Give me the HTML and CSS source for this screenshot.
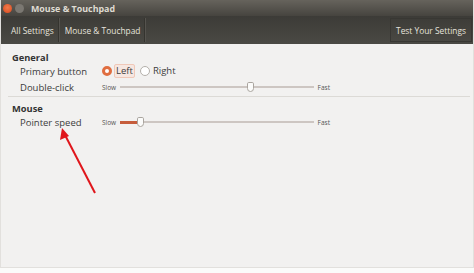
FILE: index.html
```html
<!DOCTYPE html>
<html lang="en">
<head>
  <meta charset="UTF-8" />
  <title>Mouse &amp; Touchpad</title>
  <link rel="stylesheet" href="styles.css">
</head>
<body>
  <div class="window">
    <!-- ===== TITLE BAR ===== -->
    <header class="titlebar">
      <span class="dot close"></span>
      <span class="dot min"></span>
      <span class="title">Mouse &amp; Touchpad</span>
    </header>

    <!-- ===== TOOLBAR ===== -->
    <nav class="toolbar">
      <button class="tb-btn">All Settings</button>
      <button class="tb-btn">Mouse &amp; Touchpad</button>
      <button class="tb-btn right">Test Your Settings</button>
    </nav>

    <!-- ===== CONTENT ===== -->
    <main class="content">
      <section class="group">
        <h2>General</h2>
        <div class="row">
          <span class="label">Primary button</span>
          <label class="radio checked"><span class="circle"></span><span class="rtext">Left</span></label>
          <label class="radio"><span class="circle"></span><span class="rtext">Right</span></label>
        </div>
        <div class="row">
          <span class="label">Double-click</span>
          <div class="slider">
            <span class="end">Slow</span>
            <div class="track"><span class="knob" style="left: 67%"></span></div>
            <span class="end">Fast</span>
          </div>
        </div>
      </section>

      <hr class="sep">

      <section class="group">
        <h2>Mouse</h2>
        <div class="row">
          <span class="label">Pointer speed</span>
          <div class="slider">
            <span class="end">Slow</span>
            <div class="track"><span class="fill" style="width: 10%"></span><span class="knob" style="left: 10%"></span></div>
            <span class="end">Fast</span>
          </div>
        </div>
      </section>
    </main>

    <!-- annotation arrow -->
    <svg class="arrow" width="474" height="273" viewBox="0 0 474 273">
      <line x1="95" y1="193" x2="65" y2="135" stroke="#e0161b" stroke-width="2" />
      <polygon points="62,128 60,140 69,136" fill="#e0161b" />
    </svg>
  </div>
</body>
</html>
```

FILE: styles.css
```css
* { box-sizing: border-box; margin: 0; padding: 0; }

body {
  width: 474px;
  height: 273px;
  background: #fbfbfa;
  font-family: "Open Sans", "DejaVu Sans", sans-serif;
  overflow: hidden;
}

.window {
  position: relative;
  height: 268px;
  background: #f2f1f0;
  border: 1px solid #e2e0dd;
  border-top: none;
  display: flex;
  flex-direction: column;
}

/* ===== TITLE BAR ===== */
.titlebar {
  height: 16px;
  background: linear-gradient(#66635c, #46443f);
  display: flex;
  align-items: center;
  padding-left: 2px;
  gap: 3px;
}
.dot { width: 9px; height: 9px; border-radius: 50%; }
.dot.close { background: radial-gradient(circle at 50% 40%, #f27c4c, #d9471c); }
.dot.min { background: #7b7872; }
.title {
  margin-left: 4px;
  color: #dfdbd2;
  font-size: 8.9px;
  font-weight: 700;
}

/* ===== TOOLBAR ===== */
.toolbar {
  height: 28px;
  background: linear-gradient(#3c3b37, #4a4944);
  display: flex;
  align-items: center;
  padding: 0 1px 0 7px;
  gap: 3px;
}
.tb-btn {
  font-family: inherit;
  font-size: 8.4px;
  color: #e6e3dd;
  background: transparent;
  border: none;
  border-right: 1px solid #35342f;
  box-shadow: 1px 0 0 #55534e;
  height: 24px;
  padding: 0 4px 0 3px;
}
.tb-btn.right {
  margin-left: auto;
  border: 1px solid #383733;
  box-shadow: none;
  padding: 0 5px;
}

/* ===== CONTENT ===== */
.content {
  padding: 8px 7px 0 11px;
  color: #3c3c3c;
  font-size: 9.5px;
}
.group h2 {
  font-size: 9.3px;
  font-weight: 700;
  color: #333;
  height: 12px;
  line-height: 12px;
}
.row {
  display: flex;
  align-items: center;
  height: 14px;
  padding-left: 8px;
  margin-bottom: 2px;
}
.label { width: 82px; }

.radio { display: flex; align-items: center; margin-right: 5px; }
.circle {
  width: 10px;
  height: 10px;
  border-radius: 50%;
  border: 1px solid #b4b0aa;
  background: #fff;
  margin-right: 2px;
}
.radio.checked .circle {
  border: 3px solid #e06e40;
  background: #fff;
}
.rtext { padding: 0 1px; line-height: 12px; }
.radio.checked .rtext {
  border: 1px solid #f0c8b8;
  background: #f6e7e1;
  border-radius: 2px;
}

.slider {
  display: flex;
  align-items: center;
  width: 228px;
  gap: 4px;
}
.end { font-size: 6.5px; color: #555; }
.track {
  position: relative;
  flex: 1;
  height: 2px;
  background: #cdc6c2;
}
.fill {
  position: absolute;
  left: 0;
  top: -0.5px;
  height: 3px;
  background: #c65d3c;
}
.knob {
  position: absolute;
  top: -4px;
  width: 7px;
  height: 10px;
  margin-left: -3px;
  background: #fbfbfa;
  border: 1px solid #aaa59f;
  border-radius: 2px 2px 4px 4px;
}

.sep {
  border: none;
  border-top: 1px solid #dcdad6;
  margin: 1px -4px 6px -4px;
}

.arrow { position: absolute; left: -1px; top: 0; pointer-events: none; }
```
